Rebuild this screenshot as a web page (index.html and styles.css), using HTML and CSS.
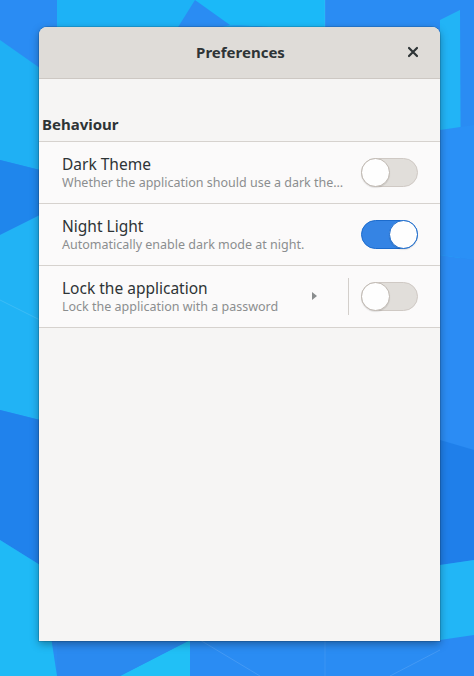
FILE: index.html
```html
<!DOCTYPE html>
<html>
<head>
<meta charset="utf-8">
<link rel="stylesheet" href="styles.css">
</head>
<body>
<div class="desktop">
  <svg class="wallpaper" width="474" height="676" viewBox="0 0 474 676" xmlns="http://www.w3.org/2000/svg">
    <rect x="0" y="0" width="474" height="676" fill="#2a8cf3"/>
    <polygon points="57,0 195,0 170,40 57,80" fill="#1db2f6"/>
    <polygon points="195,0 325,0 325,30 230,25" fill="#1bb9f8"/>
    <polygon points="170,40 230,25 325,30 325,80 140,90" fill="#22a8f4"/>
    <polygon points="0,40 57,80 40,170 0,160" fill="#1fb0f4"/>
    <polygon points="0,160 40,170 40,215 0,235" fill="#1f86ec"/>
    <polygon points="0,235 40,215 40,420 0,410" fill="#21b3f5"/>
    <polygon points="0,410 40,420 40,565 0,540" fill="#2082ec"/>
    <polygon points="0,540 40,565 57,676 0,676" fill="#1fbaf6"/>
    <polygon points="120,676 190,640 190,676" fill="#21c0f6"/>
    <polygon points="57,640 190,640 120,676 57,676" fill="#2a8af0"/>
    <polygon points="440,20 460,10 462,440 440,430" fill="#22b4f6"/>
    <polygon points="440,130 474,125 474,260 440,255" fill="#2a90f6"/>
    <polygon points="440,255 474,260 474,450 440,440" fill="#2b8cf4"/>
    <polygon points="440,440 474,450 474,560 440,565" fill="#1f7fea"/>
    <polygon points="440,565 474,560 474,640 440,640" fill="#22b6f6"/>
    <polygon points="440,640 474,635 474,676 440,676" fill="#2a8af3"/>
    <line x1="325" y1="0" x2="325" y2="676" stroke="#ffffff" stroke-opacity="0.08"/>
    <line x1="0" y1="300" x2="40" y2="320" stroke="#ffffff" stroke-opacity="0.12"/>
    <line x1="200" y1="640" x2="260" y2="676" stroke="#ffffff" stroke-opacity="0.12"/>
    <line x1="390" y1="676" x2="440" y2="650" stroke="#ffffff" stroke-opacity="0.12"/>
  </svg>

  <div class="window">
    <header class="headerbar">
      <span class="title">Preferences</span>
      <span class="close">
        <svg width="12" height="12" viewBox="0 0 12 12"><path d="M2 2 L10 10 M10 2 L2 10" stroke="#2e3436" stroke-width="2.2" stroke-linecap="round"/></svg>
      </span>
    </header>
    <main class="content">
      <h2 class="group-title">Behaviour</h2>
      <div class="list">
        <div class="row">
          <div class="row-text">
            <div class="row-title">Dark Theme</div>
            <div class="row-subtitle">Whether the application should use a dark the…</div>
          </div>
          <div class="switch"><span class="knob"></span></div>
        </div>
        <div class="row">
          <div class="row-text">
            <div class="row-title">Night Light</div>
            <div class="row-subtitle">Automatically enable dark mode at night.</div>
          </div>
          <div class="switch on"><span class="knob"></span></div>
        </div>
        <div class="row">
          <div class="row-text">
            <div class="row-title">Lock the application</div>
            <div class="row-subtitle">Lock the application with a password</div>
          </div>
          <span class="arrow"></span>
          <span class="vsep"></span>
          <div class="switch"><span class="knob"></span></div>
        </div>
      </div>
    </main>
  </div>
</div>
</body>
</html>
```
FILE: styles.css
```css
html, body {
  margin: 0;
  padding: 0;
}
body {
  width: 474px;
  height: 676px;
  overflow: hidden;
  font-family: "Noto Sans", "Open Sans", sans-serif;
}
.desktop {
  position: relative;
  width: 474px;
  height: 676px;
  padding: 27px 34px 0 39px;
  box-sizing: border-box;
}
.wallpaper {
  position: absolute;
  left: 0;
  top: 0;
}
.window {
  position: relative;
  width: 401px;
  height: 614px;
  background: #f6f5f4;
  border-radius: 8px 8px 0 0;
  box-shadow: 0 3px 9px rgba(0, 0, 0, 0.35), 0 0 0 1px rgba(0, 0, 0, 0.12);
  display: flex;
  flex-direction: column;
  overflow: hidden;
}
.headerbar {
  height: 52px;
  flex: none;
  background: #dfdcd8;
  border-bottom: 1px solid #cdc8c3;
  box-sizing: border-box;
  display: flex;
  align-items: center;
  justify-content: center;
  position: relative;
}
.title {
  font-weight: bold;
  font-size: 15px;
  color: #2e3436;
  margin-left: 2px;
  margin-bottom: 2px;
}
.close {
  position: absolute;
  right: 21px;
  top: 19px;
  width: 12px;
  height: 12px;
  display: flex;
}
.content {
  flex: 1;
  display: flex;
  flex-direction: column;
  padding-top: 35px;
}
.group-title {
  margin: 0 0 7px 3px;
  font-size: 15px;
  font-weight: bold;
  line-height: 20px;
  color: #2e3436;
}
.list {
  background: #fbfafa;
  border-top: 1px solid #d6d2ce;
  border-bottom: 1px solid #d6d2ce;
}
.row {
  height: 61px;
  display: flex;
  align-items: center;
  padding: 0 22px 0 23px;
}
.row + .row {
  border-top: 1px solid #d6d2ce;
}
.row-text {
  flex: 1;
  display: flex;
  flex-direction: column;
  min-width: 0;
}
.row-title {
  font-size: 15.5px;
  line-height: 20px;
  color: #2e3436;
}
.row-subtitle {
  font-size: 12.5px;
  line-height: 17px;
  color: #8b8e8f;
  white-space: nowrap;
}
.switch {
  width: 57px;
  height: 29px;
  box-sizing: border-box;
  border-radius: 15px;
  background: #e1deda;
  border: 1px solid #cfc9c4;
  flex: none;
  display: flex;
  align-items: center;
}
.switch .knob {
  width: 29px;
  height: 29px;
  margin: 0 -1px;
  border-radius: 50%;
  background: #fefefe;
  border: 1px solid #bfb8b1;
  box-sizing: border-box;
  box-shadow: 0 1px 1px rgba(0, 0, 0, 0.1);
}
.switch.on {
  background: #3584e4;
  border-color: #1c6bcc;
  justify-content: flex-end;
}
.switch.on .knob {
  border-color: #1c6bcc;
}
.arrow {
  width: 0;
  height: 0;
  border-top: 4px solid transparent;
  border-bottom: 4px solid transparent;
  border-left: 5px solid #8a8d8e;
  margin-right: 31px;
  margin-top: -2px;
}
.vsep {
  width: 1px;
  height: 37px;
  background: #d3cfcb;
  margin-right: 12px;
}
```
